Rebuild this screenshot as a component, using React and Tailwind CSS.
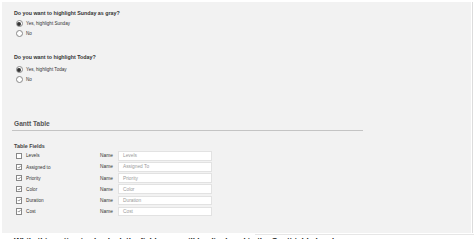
import React from 'react';

const fields = [
  { label: 'Levels', value: 'Levels', checked: false },
  { label: 'Assigned to', value: 'Assigned To', checked: true },
  { label: 'Priority', value: 'Priority', checked: true },
  { label: 'Color', value: 'Color', checked: true },
  { label: 'Duration', value: 'Duration', checked: true },
  { label: 'Cost', value: 'Cost', checked: true },
];

const Radio = ({ checked, label }) => (
  <div className="flex items-center h-[9.3px]">
    <span className="ml-[1.5px] w-[7px] h-[7px] rounded-full border border-[#888] bg-white flex items-center justify-center">
      {checked && <span className="w-[3.4px] h-[3.4px] rounded-full bg-[#333]" />}
    </span>
    <span className="ml-[3.5px] text-[4.6px] leading-[9px] text-[#333]">{label}</span>
  </div>
);

const Check = ({ checked }) => (
  <span className="ml-[1.5px] w-[6.5px] h-[6.5px] border border-[#888] bg-white flex items-center justify-center">
    {checked && (
      <svg viewBox="0 0 10 10" className="w-[6px] h-[6px]">
        <path d="M1.8 5.2 L4 7.4 L8.4 2.4" fill="none" stroke="#444" strokeWidth="1.3" />
      </svg>
    )}
  </span>
);

const Question = ({ text, className }) => (
  <div className={`h-[8px] leading-[8px] text-[5.3px] font-bold text-[#333] ${className}`}>{text}</div>
);

export default function App() {
  return (
    <div className="w-[474px] h-[239px] bg-white overflow-hidden font-['Liberation_Sans',Arial,sans-serif]">
      <div className="pt-[2px] pl-[2px] pr-[1px] flex">
        <div className="w-[470px] h-[231px] bg-[#f2f2f2] pl-[12px] pt-[6.7px]">
          <Question text="Do you want to highlight Sunday as gray?" />
          <div className="mt-[2.5px]">
            <Radio checked label="Yes, highlight Sunday" />
            <Radio label="No" />
          </div>

          <Question text="Do you want to highlight Today?" className="mt-[15.4px]" />
          <div className="mt-[4px]">
            <Radio checked label="Yes, highlight Today" />
            <Radio label="No" />
          </div>

          <div className="mt-[35px] h-[10px] leading-[10px] text-[6.6px] font-bold text-[#555]">Gantt Table</div>
          <div className="-ml-[2px] mt-[1.5px] w-[351px] h-px bg-[#c4c4c4]" />

          <div className="mt-[10.7px] h-[8px] leading-[8px] text-[5.4px] font-bold text-[#444]">Table Fields</div>
          <div className="mt-[0.45px]">
            {fields.map((f) => (
              <div key={f.label} className="flex items-center h-[11.1px]">
                <Check checked={f.checked} />
                <span className="ml-[4px] w-[74px] text-[4.7px] text-[#333]">{f.label}</span>
                <span className="w-[18px] text-[4.8px] text-[#333]">Name</span>
                <div className="w-[94px] h-[9.5px] bg-white border border-[#e2e2e2] pl-[4px] flex items-center text-[4.8px] text-[#9a9a9a]">
                  {f.value}
                </div>
              </div>
            ))}
          </div>
        </div>
        <div className="ml-[1px] w-px h-[231px] bg-[#dcdcdc]" />
      </div>
      <div className="mt-[1px] ml-[255px] h-px bg-[#e6e6e6]" />
      <div className="h-[5px] overflow-hidden">
        <div className="pl-[14px] pt-[1.5px] text-[8px] leading-[8px] font-bold text-[#222] whitespace-nowrap">
          While this option is checked, the field name will be displayed in the Gantt table header row
        </div>
      </div>
    </div>
  );
}
